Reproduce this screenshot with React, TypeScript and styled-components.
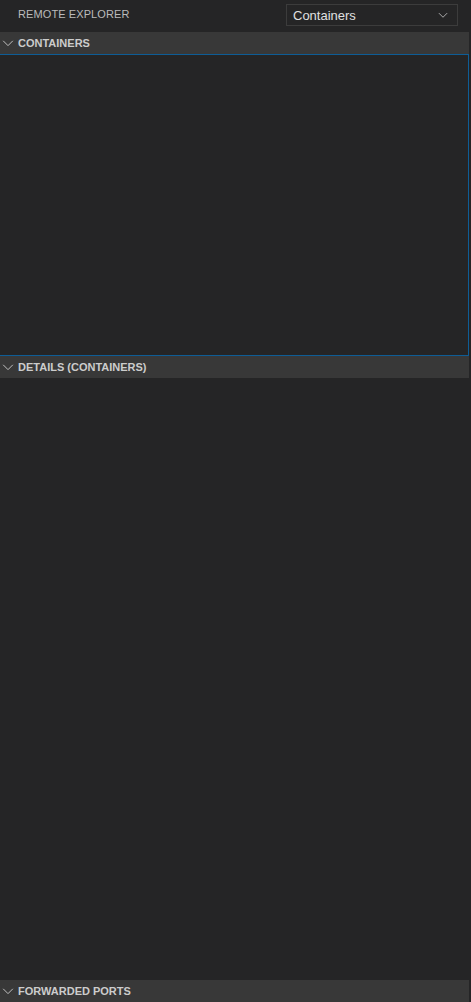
import React from "react";
import styled, { createGlobalStyle } from "styled-components";

const Global = createGlobalStyle`
  html, body { margin: 0; padding: 0; background: #252526; }
  body { font-family: "Liberation Sans", Arial, sans-serif; }
`;

const Root = styled.div`
  width: 471px;
  height: 1002px;
  display: flex;
  background: #252526;
  overflow: hidden;
`;

const Column = styled.div`
  width: 469px;
  display: flex;
  flex-direction: column;
`;

const Strip = styled.div`
  width: 2px;
  background: #252526;
`;

const TitleBar = styled.div`
  height: 32px;
  display: flex;
  align-items: center;
  justify-content: space-between;
  padding: 0 11px 0 18px;
  box-sizing: border-box;
`;

const Title = styled.span`
  font-size: 11px;
  color: #bbbbbb;
  letter-spacing: 0.1px;
  margin-top: -4px;
`;

const Select = styled.div`
  width: 172px;
  height: 22px;
  box-sizing: border-box;
  border: 1px solid #3c3c3c;
  display: flex;
  align-items: center;
  justify-content: space-between;
  padding: 0 8px 0 6px;
  margin-top: -2px;
  color: #e0e0e0;
  font-size: 13px;
`;

const Header = styled.div`
  height: 22px;
  flex: none;
  display: flex;
  align-items: center;
  background: #383838;
  color: #cccccc;
  font-size: 11px;
  font-weight: bold;
  gap: 3px;
  padding-left: 1px;
`;

const Body = styled.div<{ $h: number; $focused?: boolean }>`
  height: ${(p) => p.$h}px;
  flex: none;
  box-sizing: border-box;
  border: ${(p) => (p.$focused ? "1px solid #0e5d96" : "none")};
  border-left: none;
`;

const Chevron = ({ size = 14, color = "#c5c5c5" }: { size?: number; color?: string }) => (
  <svg width={size} height={size} viewBox="0 0 16 16" fill="none">
    <path d="M2.5 5.5 L8 11 L13.5 5.5" stroke={color} strokeWidth="1.1" />
  </svg>
);

export default function App() {
  return (
    <>
      <Global />
      <Root>
        <Column>
          <TitleBar>
            <Title>REMOTE EXPLORER</Title>
            <Select>
              <span>Containers</span>
              <Chevron size={12} color="#c5c5c5" />
            </Select>
          </TitleBar>
          <Header>
            <Chevron />
            <span>CONTAINERS</span>
          </Header>
          <Body $h={302} $focused />
          <Header>
            <Chevron />
            <span>DETAILS (CONTAINERS)</span>
          </Header>
          <Body $h={602} />
          <Header>
            <Chevron />
            <span>FORWARDED PORTS</span>
          </Header>
        </Column>
        <Strip />
      </Root>
    </>
  );
}
